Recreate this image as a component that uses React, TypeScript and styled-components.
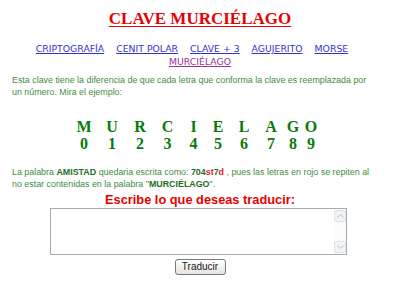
import React from 'react'
import styled, { createGlobalStyle } from 'styled-components'

const Global = createGlobalStyle`
    html, body {
        margin: 0;
        padding: 0;
        background: #ffffff;
    }
`
const Page = styled.div`
    width: 400px;
    height: 282px;
    overflow: hidden;
    font-family: "Liberation Sans", Arial, sans-serif;
`
const Title = styled.h1`
    margin: 0;
    padding-top: 9px;
    text-align: center;
    font-family: "Liberation Serif", "Times New Roman", serif;
    font-size: 17px;
    font-weight: bold;
    line-height: 20px;
    color: #e60000;
    text-decoration: underline;
    text-underline-offset: 2px;
`
const Nav = styled.nav`
    margin-top: 13px;
    font-family: "Comic Sans MS", "DejaVu Sans", sans-serif;
    font-size: 9.3px;
    line-height: 13px;
`
const NavRow = styled.div<{ $shift?: number }>`
    display: flex;
    justify-content: center;
    gap: 12px;
    padding-right: ${props => props.$shift || 0}px;
`
const NavLink = styled.a<{ $visited?: boolean }>`
    white-space: nowrap;
    color: ${props => props.$visited ? '#993399' : '#3333cc'};
    text-decoration: underline;
    cursor: pointer;
`
const Text = styled.p`
    margin: 0;
    padding: 0 25px 0 12px;
    font-size: 8.9px;
    line-height: 12px;
    color: #3f8c3f;
`
const Intro = styled(Text)`
    margin-top: 6px;
`
const Strong = styled.b`
    color: #1f6e1f;
`
const Red = styled.b`
    color: #e02020;
`
const Key = styled.div`
    margin: 20px 0 0 70px;
    display: grid;
    grid-template-columns: 28px 28px 28px 27px 25px 24px 28px 26px 18px 18px;
    grid-auto-rows: 17px;
    font-family: "Liberation Serif", "Times New Roman", serif;
    font-size: 16px;
    font-weight: bold;
    color: #0a7a0a;
    text-align: center;
`
const Example = styled(Text)`
    margin-top: 14px;
`
const Ask = styled.h2`
    margin: 2px 0 0;
    text-align: center;
    font-size: 12.8px;
    line-height: 15px;
    font-weight: bold;
    color: #e60000;
`
const Box = styled.div`
    margin: 1px 0 0 50px;
    width: 295px;
    height: 45px;
    border: 1px solid #a4acb4;
    display: flex;
`
const Area = styled.textarea`
    flex: 1;
    border: none;
    outline: none;
    resize: none;
    padding: 2px;
    font-family: "Liberation Sans", Arial, sans-serif;
    font-size: 10px;
    overflow: hidden;
`
const Scroll = styled.div`
    width: 12px;
    display: flex;
    flex-direction: column;
    justify-content: space-between;
    padding: 1px 0;
    background: #fbfbfb;
`
const Arrow = styled.div`
    height: 10px;
    border: 1px solid #dde2e6;
    border-radius: 2px;
    background: #f2f4f6;
    display: flex;
    align-items: center;
    justify-content: center;
`
const Actions = styled.div`
    margin-top: 4px;
    display: flex;
    justify-content: center;
`
const Button = styled.button`
    width: 51px;
    height: 16px;
    padding: 0;
    border: 1px solid #707880;
    border-radius: 3px;
    background: linear-gradient(#ffffff, #e4e4e0);
    font-family: "Liberation Sans", Arial, sans-serif;
    font-size: 10px;
    line-height: 14px;
    color: #222;
`

const letters = ['M', 'U', 'R', 'C', 'I', 'E', 'L', 'A', 'G', 'O']

function ArrowIcon({ up }: { up?: boolean }) {
    return (
        <svg width="7" height="4" viewBox="0 0 7 4">
            <path d={up ? 'M0.5 3.5 L3.5 0.5 L6.5 3.5' : 'M0.5 0.5 L3.5 3.5 L6.5 0.5'} fill="none" stroke="#b8c0c8" strokeWidth="1" />
        </svg>
    )
}

export default function App() {
    return (
        <Page>
            <Global />
            <Title>CLAVE MURCIÉLAGO</Title>
            <Nav>
                <NavRow $shift={16}>
                    <NavLink>CRIPTOGRAFÍA</NavLink>
                    <NavLink>CENIT POLAR</NavLink>
                    <NavLink>CLAVE + 3</NavLink>
                    <NavLink>AGUJERITO</NavLink>
                    <NavLink>MORSE</NavLink>
                </NavRow>
                <NavRow>
                    <NavLink $visited>MURCIÉLAGO</NavLink>
                </NavRow>
            </Nav>
            <Intro>
                Esta clave tiene la diferencia de que cada letra que conforma la clave es reemplazada por un número. Mira el ejemplo:
            </Intro>
            <Key>
                {letters.map(l => <span key={l}>{l}</span>)}
                {letters.map((l, i) => <span key={'n' + i}>{i}</span>)}
            </Key>
            <Example>
                La palabra <Strong>AMISTAD</Strong> quedaria escrita como: <Strong>704</Strong><Red>st</Red><Strong>7</Strong><Red>d</Red> , pues las letras en rojo se repiten al no estar contenidas en la palabra "<Strong>MURCIÉLAGO</Strong>".
            </Example>
            <Ask>Escribe lo que deseas traducir:</Ask>
            <Box>
                <Area />
                <Scroll>
                    <Arrow><ArrowIcon up /></Arrow>
                    <Arrow><ArrowIcon /></Arrow>
                </Scroll>
            </Box>
            <Actions>
                <Button>Traducir</Button>
            </Actions>
        </Page>
    )
}
